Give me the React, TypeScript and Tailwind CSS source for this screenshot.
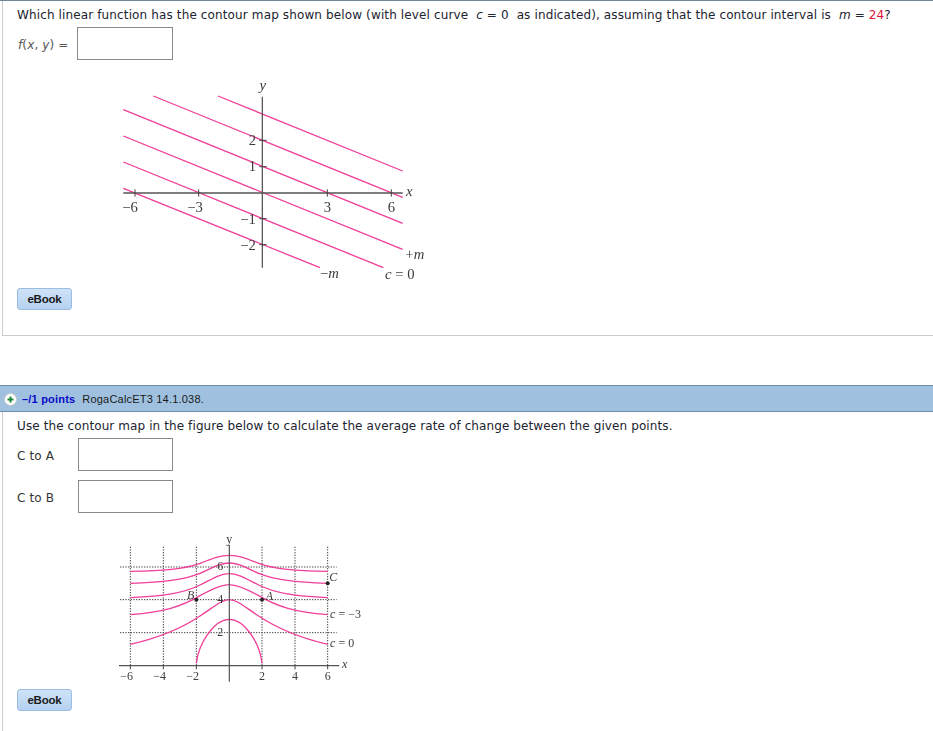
// App.tsx
const BODY = "font-['DejaVu_Sans',sans-serif] text-[12px] tracking-[0.13px] text-[#1c2430]"

function EBookButton() {
  return (
    <button className="flex h-[22px] w-[55px] items-center justify-center rounded-[3px] border border-[#9dbde0] bg-gradient-to-b from-[#cfe2f7] to-[#b5d2f1] pt-[1px] font-['Liberation_Sans',sans-serif] text-[11.5px] font-bold tracking-[-0.2px] text-[#1a1a1a]">
      eBook
    </button>
  )
}

function AnswerBox({ className }: { className: string }) {
  return <div className={`h-[33px] border border-[#8a8a8a] bg-white ${className}`} />
}

function LinearContourMap() {
  const lines = [
    'M354 63L908 288',
    'M160 63L908 367',
    'M70 104L908 445',
    'M70 183L908 523',
    'M70 261L850 578',
    'M70 340L660 578',
  ]
  const xTicks = [105, 296, 682, 874]
  const yTicks = [196, 275, 431, 509]
  const serif = "font-['Liberation_Serif',serif]"
  return (
    <svg width={330} height={215} viewBox="0 0 990 645" className="block blur-[0.3px]">
      {lines.map(d => (
        <path key={d} d={d} fill="none" stroke="#f03f98" strokeWidth={4} />
      ))}
      <path d="M70 354H908M487 65V578" fill="none" stroke="#555" strokeWidth={3.8} />
      {xTicks.map(x => (
        <path key={x} d={`M${x} 343V365`} stroke="#444" strokeWidth={3} />
      ))}
      {yTicks.map(y => (
        <path key={y} d={`M478 ${y}H500`} stroke="#444" strokeWidth={3} />
      ))}
      <g className={serif} fontSize={44} fill="#3c3c3c">
        <text x={488} y={46} textAnchor="middle" fontStyle="italic">y</text>
        <text x={918} y={364} fontStyle="italic">x</text>
        <text x={90} y={410} textAnchor="middle">−6</text>
        <text x={285} y={410} textAnchor="middle">−3</text>
        <text x={682} y={410} textAnchor="middle">3</text>
        <text x={874} y={410} textAnchor="middle">6</text>
        <text x={468} y={211} textAnchor="end">2</text>
        <text x={468} y={289} textAnchor="end">1</text>
        <text x={468} y={446} textAnchor="end">−1</text>
        <text x={468} y={524} textAnchor="end">−2</text>
        <text x={916} y={552}>+<tspan fontStyle="italic">m</tspan></text>
        <text x={660} y={608}>−<tspan fontStyle="italic">m</tspan></text>
        <text x={855} y={612}><tspan fontStyle="italic">c</tspan> = 0</text>
      </g>
    </svg>
  )
}

function PeakContourMap() {
  const curves = [
    'M91 124C190 122 250 118 300 100C340 84 360 76 388 76C416 76 436 84 476 100C526 118 586 122 683 124',
    'M91 160C190 157 250 150 300 130C340 112 360 99 388 99C416 99 436 112 476 130C526 150 586 157 683 160',
    'M91 203C190 198 250 190 300 165C340 145 360 131 388 131C416 131 436 145 476 165C526 190 586 198 683 203',
    'M91 254C190 246 245 230 300 197C340 175 365 164 388 164C411 164 436 175 476 197C531 230 586 246 683 254',
    'M91 343C170 325 245 295 300 258C340 232 365 209 388 209C411 209 436 232 476 258C531 295 606 325 683 343',
    'M289 400C295 345 340 268 388 268C436 268 481 345 486 400',
  ]
  const verticals = [91, 190, 289, 486, 585, 683]
  const horizontals = [111, 209, 308]
  const points = [
    [289, 209],
    [486, 209],
    [683, 160],
  ]
  return (
    <svg width={270} height={160} viewBox="0 0 810 480" className="block blur-[0.3px]">
      <g stroke="#444" strokeWidth={3} strokeDasharray="4 4" fill="none">
        {verticals.map(x => (
          <path key={x} d={`M${x} 50V407`} />
        ))}
        {horizontals.map(y => (
          <path key={y} d={`M60 ${y}H710`} />
        ))}
      </g>
      {curves.map(d => (
        <path key={d} d={d} fill="none" stroke="#f03f98" strokeWidth={4} />
      ))}
      <path d="M57 407H718M388 45V455" fill="none" stroke="#555" strokeWidth={3.6} />
      {verticals.map(x => (
        <path key={x} d={`M${x} 407V418`} stroke="#444" strokeWidth={3} />
      ))}
      {points.map(([x, y]) => (
        <circle key={x} cx={x} cy={y} r={6} fill="#222" />
      ))}
      <g className="font-['Liberation_Serif',serif]" fontSize={36} fill="#3c3c3c">
        <text x={388} y={40} textAnchor="middle">y</text>
        <text x={726} y={413} fontStyle="italic">x</text>
        <text x={80} y={450} textAnchor="middle">−6</text>
        <text x={179} y={450} textAnchor="middle">−4</text>
        <text x={278} y={450} textAnchor="middle">−2</text>
        <text x={486} y={450} textAnchor="middle">2</text>
        <text x={585} y={450} textAnchor="middle">4</text>
        <text x={683} y={450} textAnchor="middle">6</text>
        <text x={361} y={121} textAnchor="middle">6</text>
        <text x={361} y={220} textAnchor="middle">4</text>
        <text x={361} y={318} textAnchor="middle">2</text>
        <text x={272} y={208} textAnchor="middle" fontStyle="italic">B</text>
        <text x={508} y={209} textAnchor="middle" fontStyle="italic">A</text>
        <text x={700} y={152} textAnchor="middle" fontStyle="italic">C</text>
        <text x={690} y={264}><tspan fontStyle="italic">c</tspan> = −3</text>
        <text x={690} y={351}><tspan fontStyle="italic">c</tspan> = 0</text>
      </g>
    </svg>
  )
}

function PlusBadge() {
  return (
    <span className="flex h-[13px] w-[13px] items-center justify-center rounded-full border border-[#c8c8c8] bg-white">
      <svg width={7} height={7} viewBox="0 0 7 7">
        <path d="M3.5 0.5V6.5M0.5 3.5H6.5" stroke="#1f8a3b" strokeWidth={2} />
      </svg>
    </span>
  )
}

export default function App() {
  return (
    <div className={`h-[731px] w-[933px] overflow-hidden bg-white ${BODY}`}>
      {/* First question, continued from the page above */}
      <div className="h-px bg-[#6f8798]" />
      <div className="ml-[2px] h-[335px] border-b border-l border-[#cccccc] pl-[14px]">
        <p className="pt-[6px] leading-[16px] whitespace-pre">
          Which linear function has the contour map shown below (with level curve{'  '}
          <i>c</i> = 0{'  '}as indicated), assuming that the contour interval is{'  '}
          <i>m</i> = <span className="text-[#e0103a]">24</span>?
        </p>
        <div className="mt-[4px] flex items-center">
          <span className="w-[60px] pl-[1px] pt-[2px] text-[#555]"><i>f</i>(<i>x</i>, <i>y</i>) =</span>
          <AnswerBox className="w-[96px]" />
        </div>
        <div className="-ml-[2px] mt-[15px] pl-[85px]">
          <LinearContourMap />
        </div>
        <div className="-mt-[2px]">
          <EBookButton />
        </div>
      </div>

      {/* Second question */}
      <div className="mt-[49px] flex h-[27px] items-center gap-[5px] border-y border-[#6f8da8] bg-[#9fc1df] pl-[4px] pt-[1px] font-['Liberation_Sans',sans-serif] text-[11px] tracking-[0.2px]">
        <PlusBadge />
        <b className="text-[#0a0ac8]">–/1 points</b>
        <span className="ml-[2px] text-[#1a1a1a]">RogaCalcET3 14.1.038.</span>
      </div>
      <div className="ml-[2px] h-[320px] border-l border-[#cccccc] pl-[14px]">
        <p className="pt-[6px] leading-[16px] tracking-[0.1px]">
          Use the contour map in the figure below to calculate the average rate of change between the given points.
        </p>
        <div className="mt-[4px] flex items-center">
          <span className="w-[61px] pt-[2px] text-[#333]">C to A</span>
          <AnswerBox className="w-[95px]" />
        </div>
        <div className="mt-[9px] flex items-center">
          <span className="w-[61px] pt-[2px] text-[#333]">C to B</span>
          <AnswerBox className="w-[95px]" />
        </div>
        <div className="mt-[17px] pl-[83px]">
          <PeakContourMap />
        </div>
        <div className="-mt-[1px]">
          <EBookButton />
        </div>
      </div>
    </div>
  )
}
